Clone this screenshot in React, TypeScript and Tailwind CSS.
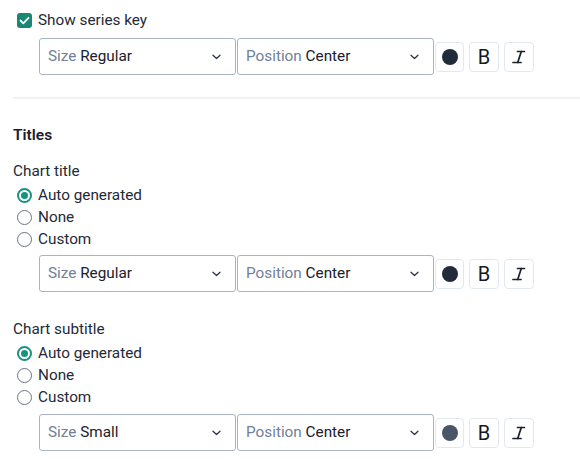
import React, { useState } from 'react';

type Opt = 'auto' | 'none' | 'custom';

const Chevron = () => (
    <svg width="9" height="6" viewBox="0 0 9 6" fill="none" className="shrink-0">
        <path d="M1 1.2l3.5 3.3L8 1.2" stroke="#2d3748" strokeWidth="1.3" strokeLinecap="round" strokeLinejoin="round" />
    </svg>
);

const ItalicIcon = () => (
    <svg width="16" height="16" viewBox="0 0 16 16" fill="none">
        <path d="M6.5 2.5h7" stroke="#1a202c" strokeWidth="1.7" strokeLinecap="round" />
        <path d="M10.3 2.5L6.7 13.5" stroke="#1a202c" strokeWidth="1.7" strokeLinecap="round" />
        <path d="M2 13.5h8" stroke="#1a202c" strokeWidth="1.7" strokeLinecap="round" />
    </svg>
);

const FakeSelect = ({ label, value }: { label: string; value: string }) => (
    <div className="w-[197px] h-[37px] border border-[#a8b3c3] rounded-[3px] flex items-center justify-between pl-[8px] pr-[14px] bg-white">
        <span className="text-[15.3px]">
            <span className="text-[#718096]">{label}</span> <span className="text-[#1a202c]">{value}</span>
        </span>
        <Chevron />
    </div>
);

const StyleRow = ({ size, swatch }: { size: string; swatch: string }) => (
    <div className="ml-[26px] flex items-center h-[37px]">
        <FakeSelect label="Size" value={size} />
        <div className="ml-px">
            <FakeSelect label="Position" value="Center" />
        </div>
        <button className="ml-px w-[29px] h-[30px] border border-[#e2e8f0] rounded-[4px] flex items-center justify-center bg-white">
            <span className={`block w-[16px] h-[16px] rounded-full ${swatch}`} />
        </button>
        <button className="ml-[5px] w-[30px] h-[30px] border border-[#e2e8f0] rounded-[4px] flex items-center justify-center bg-white text-[20px] text-[#111827] leading-none">
            B
        </button>
        <button className="ml-[5px] w-[30px] h-[30px] border border-[#e2e8f0] rounded-[4px] flex items-center justify-center bg-white">
            <ItalicIcon />
        </button>
    </div>
);

const Radio = ({ checked, label, onClick }: { checked: boolean; label: string; onClick: () => void }) => (
    <div onClick={onClick} className="h-[22px] flex items-center pl-1 cursor-pointer">
        {checked ? (
            <span className="w-[15px] h-[15px] rounded-full border-[2px] border-[#17937f] flex items-center justify-center">
                <span className="w-[7px] h-[7px] rounded-full bg-[#17937f]" />
            </span>
        ) : (
            <span className="w-[15px] h-[15px] rounded-full border-[1.5px] border-[#6b7587]" />
        )}
        <span className="ml-[6px]">{label}</span>
    </div>
);

const TitleOptions = ({ value, setValue }: { value: Opt; setValue: (o: Opt) => void }) => (
    <div className="mt-[3px]">
        <Radio checked={value === 'auto'} label="Auto generated" onClick={() => setValue('auto')} />
        <Radio checked={value === 'none'} label="None" onClick={() => setValue('none')} />
        <Radio checked={value === 'custom'} label="Custom" onClick={() => setValue('custom')} />
    </div>
);

export default function App() {
    const [showKey, setShowKey] = useState(true);
    const [title, setTitle] = useState<Opt>('auto');
    const [subtitle, setSubtitle] = useState<Opt>('auto');

    return (
        <div className="w-[580px] h-[470px] bg-white pt-[10px] pl-[13px] text-[15.3px] text-[#1f2937] font-['Roboto',sans-serif] overflow-hidden">
            <div className="h-5 flex items-center pl-1 cursor-pointer" onClick={() => setShowKey(!showKey)}>
                <span className={`w-[15px] h-[15px] rounded-[3px] flex items-center justify-center ${showKey ? 'bg-[#1a8774]' : 'border border-[#6b7587]'}`}>
                    {showKey && (
                        <svg width="11" height="9" viewBox="0 0 11 9" fill="none">
                            <path d="M1.5 4.5l2.8 2.8L9.5 1.8" stroke="white" strokeWidth="1.8" strokeLinecap="round" strokeLinejoin="round" />
                        </svg>
                    )}
                </span>
                <span className="ml-[6px]">Show series key</span>
            </div>
            <div className="mt-2">
                <StyleRow size="Regular" swatch="bg-[#222b3b]" />
            </div>

            <div className="mt-[22px] h-[2px] bg-[#eef2f7]" />

            <h3 className="mt-[26px] h-5 leading-5 font-semibold text-[15.5px] text-[#1a202c]">Titles</h3>

            <div className="mt-4 h-5 leading-5">Chart title</div>
            <TitleOptions value={title} setValue={setTitle} />
            <div className="mt-[5px]">
                <StyleRow size="Regular" swatch="bg-[#222b3b]" />
            </div>

            <div className="mt-[27px] h-5 leading-5">Chart subtitle</div>
            <TitleOptions value={subtitle} setValue={setSubtitle} />
            <div className="mt-[6px]">
                <StyleRow size="Small" swatch="bg-[#4a5568]" />
            </div>
        </div>
    );
}
